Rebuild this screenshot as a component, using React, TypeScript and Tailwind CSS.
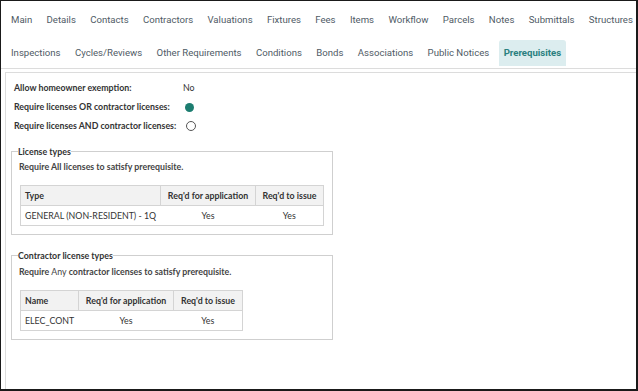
import React from "react";

const row1 = ["Main", "Details", "Contacts", "Contractors", "Valuations", "Fixtures", "Fees", "Items", "Workflow", "Parcels", "Notes", "Submittals", "Structures"];
const row2 = ["Inspections", "Cycles/Reviews", "Other Requirements", "Conditions", "Bonds", "Associations", "Public Notices", "Prerequisites"];

const Tab = ({ label, active }: { label: string; active?: boolean }) => (
    <div className={`h-[26px] px-[5px] flex items-center rounded-t-[3px] ${active ? "bg-[#dcedef] text-[#2a8080] font-bold" : "text-[#4f5b66]"}`}>
        {label}
    </div>
);

type Col = { title: string; w: string; center?: boolean };

const Table = ({ cols, values }: { cols: Col[]; values: string[] }) => (
    <table className="border-collapse border border-[#d4d4d4] text-[8.8px] whitespace-nowrap">
        <thead>
            <tr className="bg-[#f2f2f2] h-[20px]">
                {cols.map((c, i) => (
                    <th key={i} className={`${c.w} border border-[#d4d4d4] font-bold text-[#333] px-[4px] ${c.center ? "text-center" : "text-left"}`}>{c.title}</th>
                ))}
            </tr>
        </thead>
        <tbody>
            <tr className="h-[20px]">
                {values.map((v, i) => (
                    <td key={i} className={`px-[4px] text-[#333] ${i > 0 ? "text-center" : "text-left"}`}>{v}</td>
                ))}
            </tr>
        </tbody>
    </table>
);

const Group = ({ legend, note, children }: { legend: string; note: React.ReactNode; children: React.ReactNode }) => (
    <fieldset className="w-[322px] border border-[#cfcfcf] px-[7px] pb-[8px] ml-[5px]">
        <legend className="font-bold text-[#333] px-0 ml-[-1px]">{legend}</legend>
        <div className="font-bold text-[#444] mt-[2px] mb-[12px]">{note}</div>
        <div className="pl-[1px]">{children}</div>
    </fieldset>
);

export default function App() {
    return (
        <div className="w-[638px] h-[391px] bg-white border-t border-l border-r-2 border-b-2 border-[#1a1a1a] flex flex-col overflow-hidden" style={{ fontFamily: "Lato, 'Open Sans', sans-serif" }}>
            {/* tabs */}
            <div className="border-b border-[#dcdcdc] pb-[2px]" style={{ fontFamily: "Roboto, sans-serif" }}>
                <div className="flex h-[39px] items-center pl-[5px] gap-[4.3px] text-[9.6px] whitespace-nowrap">
                    {row1.map((t) => <Tab key={t} label={t} />)}
                </div>
                <div className="flex h-[26px] items-end pl-[5px] gap-[4.4px] text-[9.6px] whitespace-nowrap">
                    {row2.map((t) => <Tab key={t} label={t} active={t === "Prerequisites"} />)}
                </div>
            </div>
            {/* panel */}
            <div className="flex-1 ml-[4px] mt-[3px] border-l border-t border-[#dcdcdc] pt-[8px] text-[8.8px]">
                <div className="pl-[8px] flex flex-col gap-[5px] text-[#333]">
                    <div className="flex items-center h-[14px]">
                        <span className="w-[169px] font-bold">Allow homeowner exemption:</span>
                        <span>No</span>
                    </div>
                    <div className="flex items-center h-[14px]">
                        <span className="w-[171px] font-bold">Require licenses OR contractor licenses:</span>
                        <span className="w-[9px] h-[9px] rounded-full bg-[#1c7d70]"></span>
                    </div>
                    <div className="flex items-center h-[13px]">
                        <span className="w-[172px] font-bold">Require licenses AND contractor licenses:</span>
                        <span className="w-[10px] h-[10px] rounded-full border border-[#555] bg-white"></span>
                    </div>
                </div>
                <div className="mt-[13px] flex flex-col gap-[14px]">
                    <Group legend="License types" note={<>Require All licenses to satisfy prerequisite.</>}>
                        <Table
                            cols={[{ title: "Type", w: "w-[140px]" }, { title: "Req'd for application", w: "w-[95px]", center: true }, { title: "Req'd to issue", w: "w-[68px]", center: true }]}
                            values={["GENERAL (NON-RESIDENT) - 1Q", "Yes", "Yes"]}
                        />
                    </Group>
                    <Group legend="Contractor license types" note={<>Require <span className="font-normal">Any</span> contractor licenses to satisfy prerequisite.</>}>
                        <Table
                            cols={[{ title: "Name", w: "w-[58px]" }, { title: "Req'd for application", w: "w-[95px]", center: true }, { title: "Req'd to issue", w: "w-[69px]", center: true }]}
                            values={["ELEC_CONT", "Yes", "Yes"]}
                        />
                    </Group>
                </div>
            </div>
        </div>
    );
}
